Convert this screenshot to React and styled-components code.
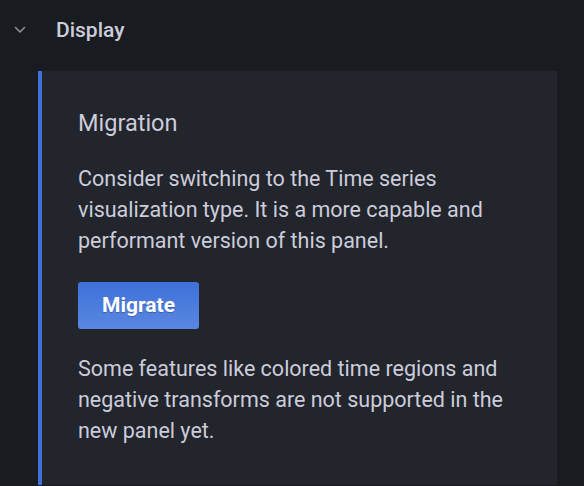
import React from "react";
import styled, { createGlobalStyle } from "styled-components";

const Global = createGlobalStyle`
  html, body { margin: 0; padding: 0; background: #181b1f; }
  body { font-family: Roboto, "Noto Sans", sans-serif; -webkit-font-smoothing: antialiased; }
  * { box-sizing: border-box; }
`;

const Page = styled.div`
  width: 584px;
  height: 486px;
  overflow: hidden;
  background: #181b1f;
  color: #ccccdc;
`;

const SectionHeader = styled.div`
  display: flex;
  align-items: center;
  height: 60px;
  padding-left: 14px;
  gap: 30px;
`;

const Chevron = styled.svg`
  width: 12px;
  height: 12px;
  color: #8e8e9a;
  flex: none;
`;

const SectionTitle = styled.span`
  font-size: 21px;
  font-weight: 500;
  color: #ccccdc;
`;

const Card = styled.div`
  margin: 11px 0 0 38px;
  width: 519px;
  border-left: 4px solid #3d71d9;
  background: #22252b;
  padding: 35px 36px 39px 36px;
`;

const Heading = styled.h4`
  margin: 0 0 22px 0;
  font-size: 23.5px;
  line-height: 34.5px;
  font-weight: 400;
  color: #ccccdc;
`;

const Text = styled.p`
  margin: 0;
  font-size: 21.5px;
  line-height: 31px;
  color: #ccccdc;
`;

const Button = styled.button`
  display: inline-flex;
  align-items: center;
  justify-content: center;
  margin: 26px 0 24px 0;
  height: 47px;
  width: 121px;
  border: none;
  border-radius: 3px;
  background: linear-gradient(180deg, #3d71d9 0%, #5a87e0 100%);
  color: #ffffff;
  font-family: Roboto, "Noto Sans", sans-serif;
  font-size: 21px;
  font-weight: 700;
  text-shadow: 0 1px 1px rgba(0, 0, 0, 0.25);
  cursor: pointer;
`;

export default function App() {
  return (
    <Page>
      <Global />
      <SectionHeader>
        <Chevron viewBox="0 0 12 12" fill="none">
          <path d="M1.5 3.5 L6 8 L10.5 3.5" stroke="currentColor" strokeWidth="1.6" strokeLinecap="round" strokeLinejoin="round" />
        </Chevron>
        <SectionTitle>Display</SectionTitle>
      </SectionHeader>
      <Card>
        <Heading>Migration</Heading>
        <Text>
          Consider switching to the Time series visualization type. It is a more capable and performant version of this panel.
        </Text>
        <Button>Migrate</Button>
        <Text>
          Some features like colored time regions and negative transforms are not supported in the new panel yet.
        </Text>
      </Card>
    </Page>
  );
}
